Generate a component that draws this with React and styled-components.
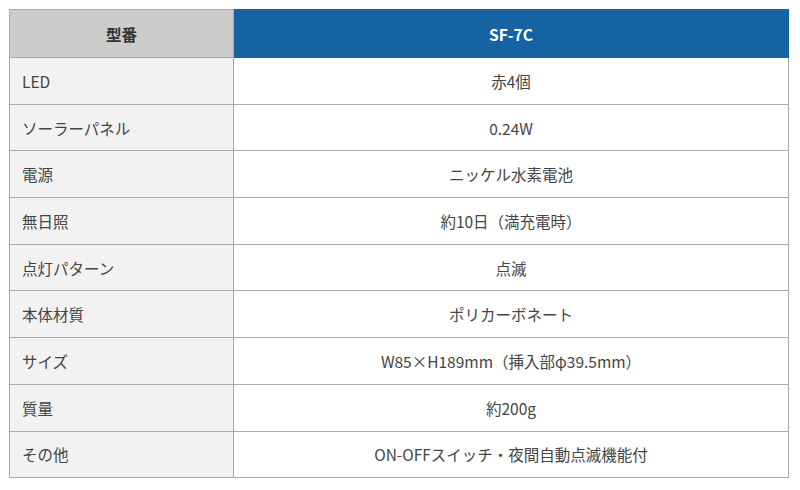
import React from 'react';
import styled, { createGlobalStyle } from 'styled-components';

const Global = createGlobalStyle`
  body {
    margin: 0;
    background: #fff;
    font-family: "Noto Sans CJK JP", "Noto Sans", sans-serif;
  }
`;

const Wrap = styled.div`
  padding: 9px 0 0 9px;
`;

const Table = styled.table`
  width: 780px;
  border-collapse: collapse;
  table-layout: fixed;
  font-size: 15.5px;
  color: #444;
`;

const HeadCell = styled.th`
  height: 47px;
  padding: 0;
  border: 1px solid ${(p) => (p.$accent ? '#1563a3' : '#aaa')};
  background: ${(p) => (p.$accent ? '#1563a3' : '#cccccc')};
  color: ${(p) => (p.$accent ? '#fff' : '#333')};
  font-weight: bold;
  text-align: center;
  width: ${(p) => p.$w || 'auto'};
`;

const LabelCell = styled.td`
  height: 45.7px;
  padding: 0 0 0 12px;
  border: 1px solid #aaa;
  background: #f2f2f2;
`;

const ValueCell = styled.td`
  padding: 0;
  border: 1px solid #aaa;
  background: #fff;
  text-align: center;
`;

const rows = [
  ['LED', '赤4個'],
  ['ソーラーパネル', '0.24W'],
  ['電源', 'ニッケル水素電池'],
  ['無日照', '約10日（満充電時）'],
  ['点灯パターン', '点滅'],
  ['本体材質', 'ポリカーボネート'],
  ['サイズ', 'W85×H189mm（挿入部φ39.5mm）'],
  ['質量', '約200g'],
  ['その他', 'ON-OFFスイッチ・夜間自動点滅機能付'],
];

export default function App() {
  return (
    <Wrap>
      <Global />
      <Table>
        <thead>
          <tr>
            <HeadCell $w="223px">型番</HeadCell>
            <HeadCell $accent>SF-7C</HeadCell>
          </tr>
        </thead>
        <tbody>
          {rows.map(([label, value]) => (
            <tr key={label}>
              <LabelCell>{label}</LabelCell>
              <ValueCell>{value}</ValueCell>
            </tr>
          ))}
        </tbody>
      </Table>
    </Wrap>
  );
}
